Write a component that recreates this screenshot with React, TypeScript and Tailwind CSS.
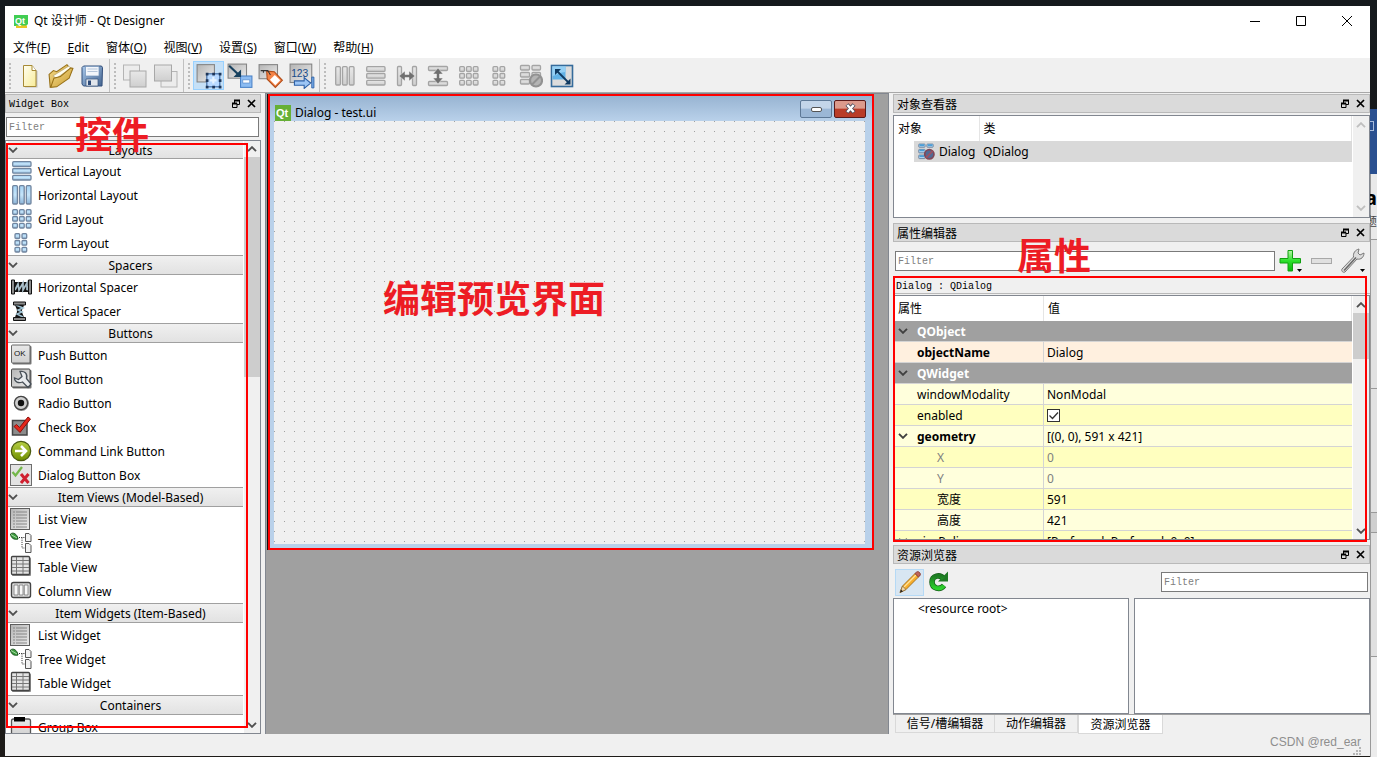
import type { ReactNode } from "react";

const sans = "font-['Noto_Sans','Noto_Sans_CJK_SC',sans-serif]";
const mono = "font-['Liberation_Mono','Noto_Sans_CJK_SC',monospace]";

/* ---------- shared bits ---------- */

function Svg({ size = 24, children }: { size?: number; children: ReactNode }) {
  return (
    <svg width={size} height={size} viewBox="0 0 24 24" fill="none" className="shrink-0" aria-hidden="true">
      {children}
    </svg>
  );
}

function Chevron({ up = false, color = "#505050" }: { up?: boolean; color?: string }) {
  return (
    <svg width="10" height="6" viewBox="0 0 10 6" fill="none" className="shrink-0" aria-hidden="true">
      <path d={up ? "M1 5.2 5 1.2 9 5.2" : "M1 .8 5 4.8 9 .8"} stroke={color} strokeWidth="1.9" />
    </svg>
  );
}

function Gradients() {
  return (
    <svg width="0" height="0" className="absolute" aria-hidden="true">
      <defs>
        <linearGradient id="blueBar" x1="0" y1="0" x2="0" y2="1">
          <stop offset="0" stopColor="#a4d2f4" />
          <stop offset=".5" stopColor="#c6e5fa" />
          <stop offset="1" stopColor="#8bb4d8" />
        </linearGradient>
        <linearGradient id="greyBar" x1="0" y1="0" x2="0" y2="1">
          <stop offset="0" stopColor="#e8e8e8" />
          <stop offset="1" stopColor="#cfcfcf" />
        </linearGradient>
        <linearGradient id="greyBox" x1="0" y1="0" x2="1" y2="1">
          <stop offset="0" stopColor="#b4b4b4" />
          <stop offset="1" stopColor="#ececec" />
        </linearGradient>
        <linearGradient id="paper" x1="0" y1="0" x2="1" y2="1">
          <stop offset="0" stopColor="#fffef2" />
          <stop offset="1" stopColor="#f8ec98" />
        </linearGradient>
        <linearGradient id="gold" x1="0" y1="0" x2="1" y2="1">
          <stop offset="0" stopColor="#f6dc8c" />
          <stop offset="1" stopColor="#c99c30" />
        </linearGradient>
        <linearGradient id="steel" x1="0" y1="0" x2="1" y2="1">
          <stop offset="0" stopColor="#a9c9ec" />
          <stop offset="1" stopColor="#44648f" />
        </linearGradient>
        <linearGradient id="olive" x1="0" y1="0" x2="0" y2="1">
          <stop offset="0" stopColor="#b7cf45" />
          <stop offset="1" stopColor="#6f8e00" />
        </linearGradient>
        <linearGradient id="leaf" x1="0" y1="0" x2="0" y2="1">
          <stop offset="0" stopColor="#1d7b22" />
          <stop offset="1" stopColor="#2cd22c" />
        </linearGradient>
        <linearGradient id="plus" x1="0" y1="0" x2="0" y2="1">
          <stop offset="0" stopColor="#b9f5a8" />
          <stop offset=".5" stopColor="#2de02d" />
          <stop offset="1" stopColor="#08b808" />
        </linearGradient>
      </defs>
    </svg>
  );
}

/* ---------- layout glyphs, blue in the widget box and grey in the toolbar ---------- */

type Tone = "blue" | "grey";
const tones = {
  blue: { fill: "url(#blueBar)", stroke: "#71859f" },
  grey: { fill: "url(#greyBar)", stroke: "#a4a4a4" },
};

function Bars({ rects, tone }: { rects: number[][]; tone: Tone }) {
  return (
    <>
      {rects.map(([x, y, w, h], i) => (
        <rect key={i} x={x} y={y} width={w} height={h} rx="1" fill={tones[tone].fill} stroke={tones[tone].stroke} strokeWidth="1.3" />
      ))}
    </>
  );
}

const grid = (xs: number[], ys: number[], w: number, h: number) => ys.flatMap((y) => xs.map((x) => [x, y, w, h]));
const thirds = [2.7, 9.5, 16.3];

const VRows = ({ tone }: { tone: Tone }) => <Svg><Bars tone={tone} rects={grid([2.7], thirds, 18.3, 4.7)} /></Svg>;
const HCols = ({ tone }: { tone: Tone }) => <Svg><Bars tone={tone} rects={grid(thirds, [2.7], 4.7, 18.3)} /></Svg>;
const GridIcon = ({ tone }: { tone: Tone }) => <Svg><Bars tone={tone} rects={grid(thirds, thirds, 4.7, 4.7)} /></Svg>;
const FormIcon = ({ tone }: { tone: Tone }) => <Svg><Bars tone={tone} rects={grid([5, 12], thirds, 4.7, 4.7)} /></Svg>;

const SplitH = () => (
  <Svg>
    <Bars tone="grey" rects={[[2.5, 2.5, 4, 19], [17.5, 2.5, 4, 19]]} />
    <path d="M4 12l6-5v3.5h4V7l6 5-6 5v-3.5h-4V17z" fill="#707070" stroke="#efefef" strokeWidth=".5" />
  </Svg>
);

const SplitV = () => (
  <Svg>
    <Bars tone="grey" rects={[[2.5, 2.5, 19, 4], [2.5, 17.5, 19, 4]]} />
    <path d="M12 4l5 6h-3.5v4H17l-5 6-5-6h3.5v-4H7z" fill="#707070" stroke="#efefef" strokeWidth=".5" />
  </Svg>
);

const BreakGrey = () => (
  <Svg>
    <Bars tone="grey" rects={[[1.5, 1.5, 9, 4.5], [13, 1.5, 8.5, 4.5], [1.5, 8.5, 9, 4.5], [13, 8.5, 8.5, 4.5], [1.5, 15.5, 9, 4.5]]} />
    <circle cx="17" cy="16.5" r="6" fill="#b4b4b4" stroke="#929292" strokeWidth="2.2" />
    <path d="M13 20.5 21 12.5" stroke="#929292" strokeWidth="2" />
  </Svg>
);

const BreakBlue = () => (
  <Svg size={17}>
    <Bars tone="blue" rects={[[1, 1.5, 9, 4.5], [12.5, 1.5, 9, 4.5], [1, 9, 9, 5], [1, 17, 9, 5]]} />
    <path d="M2 3h7M13.5 3h7M2 10.5h7M2 18.5h7" stroke="#4c9fd8" strokeWidth="2.5" />
    <circle cx="16" cy="16" r="6.5" fill="#506a95" stroke="#804858" strokeWidth="2.5" />
    <path d="M11.5 20.5l9-9" stroke="#a05060" strokeWidth="2.5" />
  </Svg>
);

/* ---------- toolbar glyphs ---------- */

const NewIcon = () => (
  <Svg>
    <path d="M7 2.5h8l4.500 5V23.500H7z" fill="#0003" />
    <path d="M5.500 1.500h8.500l4 5v16h-12.500z" fill="url(#paper)" stroke="#a78a35" />
    <path d="M14 1.500v5h4" fill="#fff" stroke="#a78a35" />
  </Svg>
);

const OpenIcon = () => (
  <Svg size={26}>
    <path d="M2 22 1 10.500 5 7l3 1 9.500-6.500L19 3.500v5z" fill="url(#gold)" stroke="#987118" />
    <path d="M4.500 12 19 3l2 1.500L8 14z" fill="#fffef2" stroke="#b2a16d" strokeWidth=".6" />
    <path d="M2.500 22.500 5.500 14l6-1.500 9.500-8L23 5l-3.500 9L8 22z" fill="url(#gold)" stroke="#987118" />
  </Svg>
);

const SaveIcon = () => (
  <Svg>
    <path d="M2 3.5 3.5 2h18l1 1.500-.5 18.500H3.500L2 20z" fill="url(#steel)" stroke="#33507c" />
    <path d="M5.500 2.500h13.500v9.500H5.500z" fill="#f2f6fb" stroke="#7090b8" strokeWidth=".7" />
    <path d="M7.500 5h10M7.500 7.500h10" stroke="#b4c5da" />
    <path d="M6 15h12v7H6z" fill="#e2e6ec" stroke="#33507c" strokeWidth=".7" />
    <path d="M8 16.500h3V21H8z" fill="#2d4a78" />
  </Svg>
);

const SendBack = () => (
  <Svg>
    <rect x=".5" y="1" width="16" height="15" fill="#ececec" stroke="#b4b4b4" />
    <rect x="7" y="7" width="16" height="16" fill="url(#greyBar)" stroke="#a8a8a8" />
  </Svg>
);

const BringFront = () => (
  <Svg>
    <rect x="7" y="7.500" width="16" height="15.500" fill="#ececec" stroke="#b4b4b4" />
    <rect x=".5" y="1" width="17" height="16" fill="url(#greyBar)" stroke="#a8a8a8" />
  </Svg>
);

const EditWidgets = () => (
  <Svg size={26}>
    <rect x="1" y="1.500" width="16" height="16" fill="url(#greyBox)" stroke="#858585" />
    <rect x="10" y="10" width="12" height="12" fill="#b8d9ff" stroke="#30609c" />
    <path d="M15 13h2v2h2v2h-2v2h-2v-2h-2v-2h2z" fill="#e6f3ff" />
    {grid([9, 15, 21], [9, 15, 21], 3, 3).map(([x, y], i) =>
      i === 4 ? null : <rect key={i} x={x} y={y} width="2.500" height="2.500" fill="#1e3558" />
    )}
  </Svg>
);

const EditSignals = () => (
  <Svg size={26}>
    <rect x="1" y="1" width="17" height="13" fill="url(#greyBox)" stroke="#858585" />
    <rect x="12.500" y="12" width="10.500" height="10.500" fill="#8cbcf2" stroke="#4c84c9" />
    <path d="M14.500 15.500h6.500v3h-6.500z" fill="#fff" stroke="#4c84c9" strokeWidth=".6" />
    <path d="M2 2.500 11 11" stroke="#17405e" strokeWidth="2" />
    <path d="M13 13V6l-7 7z" fill="#17405e" />
  </Svg>
);

const EditBuddies = () => (
  <Svg size={26}>
    <rect x="1" y="1.500" width="17" height="13" fill="url(#greyBox)" stroke="#858585" />
    <path d="M8 7.500 15 8l7.500 8-6.500 6.500L8.500 15z" fill="#f58448" stroke="#b04c18" />
    <path d="M15.500 11 20.500 16l-4.500 4.500L11 15.500z" fill="#fff" />
    <path d="M2.500 7h6.500l2.500 4M5 7v2" stroke="#333" />
  </Svg>
);

const EditTabs = () => (
  <Svg size={26}>
    <rect x="1" y="1" width="20" height="17" fill="url(#greyBox)" stroke="#858585" />
    <text x="2" y="13" fontSize="9.500" fill="#174b88" fontFamily="Liberation Sans, sans-serif">123</text>
    <path d="M5 16.500h9v-3l6 5-6 5v-3H5z" fill="#9cc5f5" stroke="#2b5fa6" />
    <path d="M21 13h2v10h-2z" fill="#79aeea" stroke="#2b5fa6" strokeWidth=".8" />
  </Svg>
);

const AdjustSize = () => (
  <Svg>
    <rect x="1.500" y="1.500" width="21" height="21" fill="#dcdcdc" stroke="#356b9b" strokeWidth="1.600" />
    <rect x="2.500" y="2.500" width="13" height="13" fill="#62b2e6" />
    <path d="M2.500 2.500h13v5.500c-5 0-8 3-13 4z" fill="#94d0f5" />
    <path d="M7 7l11 11" stroke="#103a61" strokeWidth="1.800" />
    <path d="M5 5h6l-6 6zM20.500 20.500h-6l6-6z" fill="#103a61" />
  </Svg>
);

/* ---------- widget glyphs ---------- */

const HSpacer = () => (
  <Svg>
    <path d="M4 7h16v10H4z" fill="#141414" />
    <path d="M5 15 8 9l1 6 4-7v7l4-7v7l3-6" stroke="#a9bfca" strokeWidth="1.700" />
    <path d="M1.500 5h3v14h-3zM18.500 5h3v14h-3z" fill="#8b8b8b" stroke="#111" />
  </Svg>
);

const VSpacer = () => (
  <Svg>
    <path d="M5 4h9c0 5-2 5-2 8s2 4 2 8H5c0-4 2-5 2-8S5 8 5 4z" fill="#141414" />
    <path d="M6 6l7 3-5 2 4 2-5 2 6 3" stroke="#9dc1d2" strokeWidth="1.500" />
    <path d="M3.500 3h12v3h-12zM3.500 18.500h12v3h-12z" fill="#8b8b8b" stroke="#111" />
  </Svg>
);

const PushIcon = () => (
  <Svg>
    <rect x="2.500" y="3" width="19" height="18.500" rx="1" fill="#777" />
    <rect x="1.500" y="2" width="18.500" height="18" rx="1" fill="url(#greyBar)" stroke="#666" />
    <text x="4" y="13" fontSize="8" fill="#111" fontFamily="Liberation Sans, sans-serif">OK</text>
  </Svg>
);

const ToolIcon = () => (
  <Svg>
    <rect x="2.500" y="3" width="19" height="18.500" rx="1" fill="#777" />
    <rect x="1.500" y="2" width="18.500" height="18" rx="1" fill="url(#greyBox)" stroke="#444" />
    <path d="M10 4.500c4-1 8 2 6.500 7l4.500 5.500-3 3.500-5.500-5.500c-4 1.500-8 0-8-4l4 1.500L12 9.500z" fill="#e8ebee" stroke="#485058" strokeWidth="1.300" />
  </Svg>
);

const RadioIcon = () => (
  <Svg>
    <circle cx="11.500" cy="12.500" r="7.500" fill="#8a8a8a" />
    <circle cx="11" cy="12" r="6.600" fill="#cfcfcf" stroke="#444" strokeWidth="1.300" />
    <circle cx="11" cy="12" r="3.200" fill="#111" />
  </Svg>
);

const CheckIcon = () => (
  <Svg>
    <rect x="2.500" y="5.500" width="14.500" height="14.500" fill="#8c8c8c" stroke="#444" strokeWidth="1.500" />
    <path d="M4 11.500 6.500 9.500l3 3L18 2l2.500 2L10 17.500z" fill="#e5281c" stroke="#8e0e0a" />
  </Svg>
);

const CommandIcon = () => (
  <Svg>
    <circle cx="11" cy="12" r="9.700" fill="url(#olive)" stroke="#4a5a10" strokeWidth="1.200" />
    <path d="M5 12h10.500M11 7l5 5-5 5" stroke="#fff" strokeWidth="2.600" />
  </Svg>
);

const DialogBoxIcon = () => (
  <Svg>
    <rect x=".5" y="1.500" width="21" height="21" fill="#e3e3e3" stroke="#6d6d6d" />
    <path d="M2.500 9 5.500 12.500 12 4" stroke="#74b84a" strokeWidth="2.300" />
    <path d="M11 11l7.500 9M18.500 11 11 20" stroke="#cf2030" strokeWidth="3" />
  </Svg>
);

const ListIcon = () => (
  <Svg>
    <rect x=".5" y="1.500" width="19" height="21" fill="url(#greyBox)" stroke="#5e5e5e" />
    <path d="M3 5h2M3 8h2M3 11h2M3 14h2M3 17h2M3 20h2M6 5h11M6 8h11M6 11h11M6 14h11M6 17h11M6 20h11" stroke="#858585" strokeWidth="1.200" />
  </Svg>
);

const TreeIcon = () => (
  <Svg>
    <path d="M.5 3C3 1 7 2.500 8 8 4.500 9 1 7.500.5 3z" fill="#3d9c3d" stroke="#14501a" />
    <path d="M1 3.500 7 7" stroke="#c2eac2" strokeWidth=".8" />
    <path d="M9 6.500h6M12 6.500V17h3" stroke="#222" strokeDasharray="1 1.200" />
    <path d="M15.500 2.500h3.500l2 2v6h-5.500zM15.500 12.500h3.500l2 2v7h-5.500z" fill="#f2f2f2" stroke="#555" />
  </Svg>
);

const TableIcon = () => (
  <Svg>
    <rect x="2" y="2.500" width="19" height="18.500" rx="1" fill="#888" />
    <rect x="1.500" y="1.500" width="18" height="18" rx="1" fill="#e4e4e4" stroke="#444" strokeWidth="1.300" />
    <path d="M6.500 2v17M13 2v17M2 5.500h17M2 9h17M2 12.500h17M2 16h17" stroke="#777" />
  </Svg>
);

const ColumnIcon = () => (
  <Svg>
    <rect x="1.500" y="3.500" width="19" height="15" rx="2" fill="#ddd" stroke="#444" strokeWidth="1.400" />
    <path d="M4 6h4v10H4zM9.300 6h3.700v10H9.300zM14.300 6h3.700v10h-3.700z" fill="#f8f8f8" stroke="#777" strokeWidth=".8" />
  </Svg>
);

const GroupIcon = () => (
  <Svg>
    <rect x="1.500" y="4" width="19" height="18" rx="2" fill="url(#greyBar)" stroke="#555" strokeWidth="1.300" />
    <path d="M4 2h11v4.500H4z" fill="#000" />
  </Svg>
);

/* ---------- data ---------- */

const menus = [
  ["文件", "F"],
  ["", "Edit"],
  ["窗体", "O"],
  ["视图", "V"],
  ["设置", "S"],
  ["窗口", "W"],
  ["帮助", "H"],
];

const toolGroups: { label: string; icon: ReactNode; active?: boolean }[][] = [
  [
    { label: "New", icon: <NewIcon /> },
    { label: "Open", icon: <OpenIcon /> },
    { label: "Save", icon: <SaveIcon /> },
  ],
  [
    { label: "Send to Back", icon: <SendBack /> },
    { label: "Bring to Front", icon: <BringFront /> },
  ],
  [
    { label: "Edit Widgets", icon: <EditWidgets />, active: true },
    { label: "Edit Signals/Slots", icon: <EditSignals /> },
    { label: "Edit Buddies", icon: <EditBuddies /> },
    { label: "Edit Tab Order", icon: <EditTabs /> },
  ],
  [
    { label: "Lay Out Horizontally", icon: <HCols tone="grey" /> },
    { label: "Lay Out Vertically", icon: <VRows tone="grey" /> },
    { label: "Split Horizontally", icon: <SplitH /> },
    { label: "Split Vertically", icon: <SplitV /> },
    { label: "Lay Out in a Grid", icon: <GridIcon tone="grey" /> },
    { label: "Lay Out in a Form", icon: <FormIcon tone="grey" /> },
    { label: "Break Layout", icon: <BreakGrey /> },
    { label: "Adjust Size", icon: <AdjustSize /> },
  ],
];

const widgetGroups: { title: string; items: [string, ReactNode][] }[] = [
  {
    title: "Layouts",
    items: [
      ["Vertical Layout", <VRows tone="blue" />],
      ["Horizontal Layout", <HCols tone="blue" />],
      ["Grid Layout", <GridIcon tone="blue" />],
      ["Form Layout", <FormIcon tone="blue" />],
    ],
  },
  {
    title: "Spacers",
    items: [
      ["Horizontal Spacer", <HSpacer />],
      ["Vertical Spacer", <VSpacer />],
    ],
  },
  {
    title: "Buttons",
    items: [
      ["Push Button", <PushIcon />],
      ["Tool Button", <ToolIcon />],
      ["Radio Button", <RadioIcon />],
      ["Check Box", <CheckIcon />],
      ["Command Link Button", <CommandIcon />],
      ["Dialog Button Box", <DialogBoxIcon />],
    ],
  },
  {
    title: "Item Views (Model-Based)",
    items: [
      ["List View", <ListIcon />],
      ["Tree View", <TreeIcon />],
      ["Table View", <TableIcon />],
      ["Column View", <ColumnIcon />],
    ],
  },
  {
    title: "Item Widgets (Item-Based)",
    items: [
      ["List Widget", <ListIcon />],
      ["Tree Widget", <TreeIcon />],
      ["Table Widget", <TableIcon />],
    ],
  },
  { title: "Containers", items: [["Group Box", <GroupIcon />]] },
];

type Prop = { name: string; value?: string; kind?: "group" | "check"; open?: boolean; bold?: boolean; child?: boolean; muted?: boolean; bg: string };

const props: Prop[] = [
  { name: "QObject", kind: "group", open: true, bold: true, bg: "bg-[#a0a0a0]" },
  { name: "objectName", value: "Dialog", bold: true, bg: "bg-[#fff0df]" },
  { name: "QWidget", kind: "group", open: true, bold: true, bg: "bg-[#a0a0a0]" },
  { name: "windowModality", value: "NonModal", bg: "bg-[#ffffdc]" },
  { name: "enabled", kind: "check", bg: "bg-[#ffffbf]" },
  { name: "geometry", value: "[(0, 0), 591 x 421]", open: true, bold: true, bg: "bg-[#ffffdc]" },
  { name: "X", value: "0", child: true, muted: true, bg: "bg-[#ffffbf]" },
  { name: "Y", value: "0", child: true, muted: true, bg: "bg-[#ffffdc]" },
  { name: "宽度", value: "591", child: true, bg: "bg-[#ffffbf]" },
  { name: "高度", value: "421", child: true, bg: "bg-[#ffffdc]" },
  { name: "sizePolicy", value: "[Preferred, Preferred, 0, 0]", open: true, bg: "bg-[#ffffbf]" },
];

/* ---------- panels ---------- */

function DockTitle({ children }: { children: ReactNode }) {
  return (
    <div className="flex h-[19px] shrink-0 items-center border border-[#b9b9b9] bg-[#dadada] pl-[3px] pr-1">
      <h2 className="flex-1 pt-0.5">{children}</h2>
      <button aria-label="Float" className="mr-1.5">
        <svg width="10" height="10" viewBox="0 0 10 10" fill="none">
          <path d="M3.500 4V1.500h5v4H6" stroke="#000" />
          <path d="M3 1.500h6M1 4.500h5" stroke="#000" strokeWidth="2" />
          <path d="M1.500 4.500h4.500v4H1.500z" stroke="#000" />
        </svg>
      </button>
      <button aria-label="Close">
        <svg width="9" height="9" viewBox="0 0 9 9">
          <path d="M1 1l7 7M8 1 1 8" stroke="#000" strokeWidth="1.700" />
        </svg>
      </button>
    </div>
  );
}

function Filter({ label, className }: { label: string; className: string }) {
  return (
    <input
      aria-label={label}
      placeholder="Filter"
      className={`h-5 border border-[#7a7a7a] bg-white px-0.5 text-[10px] outline-none placeholder:text-[#808080] ${mono} ${className}`}
    />
  );
}

function TitleBar() {
  return (
    <header className="flex h-[30px] shrink-0 items-center bg-white">
      <svg width="15" height="13" viewBox="0 0 15 13" className="ml-2 mr-1.5" aria-hidden="true">
        <path d="M1 0h14v9l-2 2H1z" fill="#41cd52" />
        <path d="M3 10.500h11V13H3z" fill="#e9c623" />
        <text x="2" y="9" fontSize="9" fontWeight="bold" fill="#fff" fontFamily="Liberation Sans, sans-serif">Qt</text>
      </svg>
      <h1 className="flex-1">Qt 设计师 - Qt Designer</h1>
      <button aria-label="Minimize" className="flex h-full w-[46px] items-center justify-center">
        <svg width="10" height="10"><path d="M0 5.500h10" stroke="#000" /></svg>
      </button>
      <button aria-label="Maximize" className="flex h-full w-[46px] items-center justify-center">
        <svg width="10" height="10"><path d="M.5.5h9v9h-9z" stroke="#000" fill="none" /></svg>
      </button>
      <button aria-label="Close" className="flex h-full w-[46px] items-center justify-center">
        <svg width="10" height="10"><path d="M0 0l10 10M10 0 0 10" stroke="#000" /></svg>
      </button>
    </header>
  );
}

function MenuBar() {
  return (
    <nav className="flex h-[23px] shrink-0 items-center gap-px border-b border-[#f0f0f0] bg-white pt-0.5">
      {menus.map(([name, key]) => (
        <button key={key} className="px-2">
          {name ? (
            <>
              {name}(<u>{key}</u>)
            </>
          ) : (
            <>
              <u>E</u>dit
            </>
          )}
        </button>
      ))}
    </nav>
  );
}

function ToolBar() {
  return (
    <div className="flex h-[34px] shrink-0 border-b border-[#a8a8a8]">
      {toolGroups.map((group, i) => (
        <div key={i} className={`flex items-center pr-0.5 ${i < 3 ? "border-r border-[#c0c0c0]" : ""}`}>
          <div className="flex w-[9px] flex-col items-center gap-0.5">
            {Array.from({ length: 7 }, (_, n) => (
              <span key={n} className="size-0.5 bg-[#bdbdbd]" />
            ))}
          </div>
          {group.map((tool) => (
            <button
              key={tool.label}
              aria-label={tool.label}
              className={`flex h-[29px] w-[31px] items-center justify-center border ${
                tool.active ? "border-[#99d1ff] bg-[#c5e0f7]" : "border-transparent"
              }`}
            >
              {tool.icon}
            </button>
          ))}
        </div>
      ))}
    </div>
  );
}

function WidgetBox() {
  return (
    <aside className="flex w-[256px] shrink-0 flex-col">
      <div className={`text-[10px] ${mono}`}>
        <DockTitle>Widget Box</DockTitle>
      </div>
      <Filter label="Filter widgets" className="mb-[3px] ml-px mr-0.5 mt-1 shrink-0" />
      <div className="relative flex min-h-0 flex-1 border border-[#828790] bg-white">
        <div className="min-w-0 flex-1 overflow-hidden pl-0.5">
          {widgetGroups.map((group, i) => (
            <section key={group.title}>
              <h3
                className={`flex items-center border-b border-[#a0a0a0] bg-linear-to-b from-[#f0f0f0] to-[#e2e2e2] ${
                  i === 0 ? "h-[18px]" : "h-5 border-t"
                }`}
              >
                <Chevron />
                <span className="flex-1 pt-0.5 text-center">{group.title}</span>
              </h3>
              <ul>
                {group.items.map(([name, icon]) => (
                  <li key={name}>
                    <button className="flex h-6 w-full items-center gap-1 pl-0.5 text-left">
                      {icon}
                      <span className="pt-0.5">{name}</span>
                    </button>
                  </li>
                ))}
              </ul>
            </section>
          ))}
        </div>
        <div className="ml-px flex w-4 flex-col items-center bg-[#f0f0f0]">
          <div className="flex h-4 items-center">
            <Chevron up />
          </div>
          <div className="h-[220px] w-full bg-[#cdcdcd]" />
          <div className="mt-auto flex h-4 items-center">
            <Chevron />
          </div>
        </div>
        <div className="pointer-events-none absolute bottom-[5px] left-0 right-3 top-0.5 border-2 border-[#ff0000]" />
        <p className="pointer-events-none absolute -top-7 left-[69px] whitespace-nowrap text-[37px] font-bold leading-[44px] text-[#ed1c24]">
          控件
        </p>
      </div>
    </aside>
  );
}

function Workspace() {
  return (
    <main className="relative mx-1 -mt-px min-w-0 flex-1 overflow-hidden border border-b-0 border-[#828790] bg-[#a0a0a0]">
      <div className="absolute left-0.5 top-0 flex h-[456px] w-[606px] flex-col border-2 border-[#ff0000] bg-[#b9d1ea] px-[3px] pb-1 shadow-[-1px_0_0_#111]">
        <div className="-mx-[3px] flex h-[25px] shrink-0 items-center bg-linear-to-b from-[#98b4d2] to-[#b9d1ea] pl-[5px] pr-1.5">
          <svg width="16" height="16" viewBox="0 0 16 16" className="mr-1 mt-2" aria-hidden="true">
            <rect width="16" height="16" fill="#66b036" />
            <text x="1" y="12" fontSize="11" fontWeight="bold" fill="#fff" fontFamily="Liberation Sans, sans-serif">Qt</text>
          </svg>
          <h2 className="mt-2 flex-1">Dialog - test.ui</h2>
          <button
            aria-label="Minimize form"
            className="mr-0.5 flex h-[18px] w-8 items-center justify-center rounded-xs border border-[#5d7896] bg-linear-to-b from-[#c3d5e9] from-45% to-[#9bb7d6] to-50%"
          >
            <span className="mt-0.5 h-[5px] w-[11px] rounded-xs border border-[#555] bg-white" />
          </button>
          <button
            aria-label="Close form"
            className="flex h-[18px] w-8 items-center justify-center rounded-xs border border-[#5a1a1a] bg-linear-to-b from-[#dc9a8c] from-45% to-[#b93c28] to-50%"
          >
            <svg width="13" height="11" viewBox="0 0 13 11">
              <path d="M3 1.500l7 8M10 1.500l-7 8" stroke="#4a4a5a" strokeWidth="4" />
              <path d="M3.300 2l6.400 7M9.700 2 3.300 9" stroke="#fff" strokeWidth="2.400" />
            </svg>
          </button>
        </div>
        <div className="ml-px mr-1 flex-1 bg-[#f0f0f0] bg-[conic-gradient(at_1px_1px,#0000_75%,#a0a0a0_0)] bg-size-[10px_10px]" />
        <p className="absolute left-[113px] top-[181px] whitespace-nowrap text-[37px] font-bold leading-[44px] text-[#ed1c24]">编辑预览界面</p>
      </div>
    </main>
  );
}

function ObjectInspector() {
  return (
    <section>
      <DockTitle>对象查看器</DockTitle>
      <div className="mt-0.5 flex h-[103px] border border-[#828790] bg-white">
        <table className="w-full table-fixed self-start">
          <thead>
            <tr className="h-[25px] text-left">
              <th className="w-[85px] border-r border-[#e5e5e5] pl-1 font-normal">对象</th>
              <th className="border-r border-[#e5e5e5] pl-1 font-normal">类</th>
            </tr>
          </thead>
          <tbody>
            <tr className="h-[21px]">
              <td className="p-0 pl-5">
                <div className="flex h-[21px] items-center gap-1 bg-[#d9d9d9] pl-1">
                  <BreakBlue />
                  Dialog
                </div>
              </td>
              <td className="bg-[#d9d9d9] pl-1">QDialog</td>
            </tr>
          </tbody>
        </table>
        <div className="ml-px flex w-4 shrink-0 flex-col items-center justify-between bg-[#f0f0f0] py-1.5">
          <Chevron up color="#bfbfbf" />
          <Chevron color="#bfbfbf" />
        </div>
      </div>
    </section>
  );
}

function PropertyEditor() {
  return (
    <section className="mt-[5px] flex min-h-0 flex-1 flex-col">
      <DockTitle>属性编辑器</DockTitle>
      <div className="relative flex h-9 shrink-0 items-center pl-0.5 pt-0.5">
        <Filter label="Filter properties" className="min-w-0 flex-1" />
        <button aria-label="Add property" className="ml-[3px] w-7">
          <svg width="28" height="24" viewBox="0 0 28 24">
            <path d="M10 1.500h4.500v8h8V14h-8v8H10v-8H2V9.500h8z" fill="url(#plus)" stroke="#10a010" />
            <path d="M19 20h5l-2.500 3z" fill="#000" />
          </svg>
        </button>
        <button aria-label="Remove property" className="ml-1 w-6">
          <svg width="24" height="24" viewBox="0 0 24 24">
            <rect x="1.500" y="9.500" width="20" height="5" fill="#e0e0e0" stroke="#a8a8a8" />
          </svg>
        </button>
        <button aria-label="Configure" className="ml-1.5 mr-1 w-[26px]">
          <svg width="26" height="26" viewBox="0 0 26 26">
            <path d="M2 21 13.500 9c-.5-4 1.500-7 5.500-8l-1 4 2 2 4-2c0 4-3 7-7 6L5 24c-2 1-4-1-3-3z" fill="#dcdcdc" stroke="#777" />
            <path d="M4 22.500 16 9.500" stroke="#666" strokeWidth="1.500" />
            <path d="M20 21h5l-2.500 3z" fill="#000" />
          </svg>
        </button>
        <p className="pointer-events-none absolute -top-2 left-[124px] whitespace-nowrap text-[37px] font-bold leading-[44px] text-[#ed1c24]">
          属性
        </p>
      </div>
      <div className="relative -mt-0.5 flex min-h-0 flex-1 flex-col pb-0.5 pt-0.5">
        <div className={`mb-px h-4 shrink-0 border-b border-[#b9b9b9] pl-[3px] text-[10px] leading-[17px] ${mono}`}>Dialog : QDialog</div>
        <div className="flex min-h-0 flex-1 border border-[#828790] bg-white">
          <div className="min-w-0 flex-1 overflow-hidden">
            <table className="w-full table-fixed border-separate border-spacing-0">
              <thead>
                <tr className="h-[25px] text-left">
                  <th className="w-[150px] border-r border-[#e5e5e5] pl-1 font-normal">属性</th>
                  <th className="border-r border-[#e5e5e5] pl-1 font-normal">值</th>
                </tr>
              </thead>
              <tbody>
                {props.map((p) => (
                  <tr key={p.name} className={`h-[21px] ${p.bg}`}>
                    <td
                      colSpan={p.kind === "group" ? 2 : 1}
                      className={`border-b border-[#d4d4d4] p-0 ${p.kind === "group" ? "text-white" : "border-r"}`}
                    >
                      <div className={`flex h-5 items-center ${p.bold ? "font-bold" : ""} ${p.muted ? "text-[#808080]" : ""}`}>
                        <span className={`pl-1 ${p.child ? "w-[43px]" : "w-[23px]"}`}>{p.open && <Chevron color="#404040" />}</span>
                        <span className="pt-0.5">{p.name}</span>
                      </div>
                    </td>
                    {p.kind !== "group" && (
                      <td className={`whitespace-nowrap border-b border-[#d4d4d4] p-0 pl-[3px] ${p.muted ? "text-[#808080]" : ""}`}>
                        {p.kind === "check" ? (
                          <span className="relative flex size-[13px]">
                            <input type="checkbox" defaultChecked aria-label={p.name} className="peer size-[13px] appearance-none border border-[#333] bg-white" />
                            <svg width="13" height="13" className="pointer-events-none absolute inset-0 hidden peer-checked:block">
                              <path d="M2.500 6.500 5.500 9.500 11 3.500" stroke="#333" strokeWidth="1.300" fill="none" />
                            </svg>
                          </span>
                        ) : (
                          <div className="flex h-5 items-center pt-0.5">{p.value}</div>
                        )}
                      </td>
                    )}
                  </tr>
                ))}
              </tbody>
            </table>
          </div>
          <div className="ml-px flex w-4 shrink-0 flex-col items-center bg-[#f0f0f0]">
            <div className="flex h-[17px] items-center">
              <Chevron up />
            </div>
            <div className="h-[46px] w-full bg-[#cdcdcd]" />
            <div className="mt-auto flex h-[17px] items-center">
              <Chevron />
            </div>
          </div>
        </div>
        <div className="pointer-events-none absolute bottom-0 left-0 right-[3px] top-0 border-2 border-[#ff0000]" />
      </div>
    </section>
  );
}

function ResourceBrowser() {
  return (
    <section className="mt-[3px] shrink-0">
      <DockTitle>资源浏览器</DockTitle>
      <div className="flex h-[34px] items-center px-0.5 pt-0.5">
        <button aria-label="Edit resources" className="flex h-[27px] w-[29px] items-center justify-center border border-[#b5d9f5] bg-[#d8e6f2]">
          <Svg>
            <path d="M2 22.500 4.500 16 17 3.500l3.500 3.500L8 19.500z" fill="#f6ae2d" stroke="#96610f" strokeWidth=".8" />
            <path d="M6 17 18 5" stroke="#ffe29a" strokeWidth="1.300" />
            <path d="M17 3.500c2-2 3-2.500 4.500-1s1 3-1 4.500z" fill="#c06458" stroke="#8c3c34" />
            <path d="M2 22.500 4.500 16 8 19.500z" fill="#eed6aa" stroke="#84602c" strokeWidth=".7" />
            <path d="M2 22.500l1-3 2 2z" fill="#222" />
          </Svg>
        </button>
        <button aria-label="Reload" className="ml-0.5">
          <Svg>
            <path d="M17.500 8.500C14 4 6 5.500 6 12s8 8.500 12 3.500" stroke="#155c18" strokeWidth="5.500" />
            <path d="M22 1.500v10H12z" fill="#1f7a24" />
            <path d="M17.500 8.500C14 4 6 5.500 6 12s8 8.500 12 3.500" stroke="url(#leaf)" strokeWidth="4.200" />
          </Svg>
        </button>
        <Filter label="Filter resources" className="ml-auto w-[207px]" />
      </div>
      <div className="grid h-[116px] grid-cols-2 gap-[5px]">
        <div className="border border-[#828790] bg-white pl-6 pt-0.5">&lt;resource root&gt;</div>
        <div className="border border-[#828790] bg-white" />
      </div>
      <div className="flex h-5 items-start border-t border-[#a0a0a0] pl-0.5">
        <button className="h-[18px] w-[100px] border border-t-0 border-[#d9d9d9] leading-[17px]">信号/槽编辑器</button>
        <button className="h-[18px] w-[83px] border border-l-0 border-t-0 border-[#d9d9d9] leading-[17px]">动作编辑器</button>
        <button className="h-[19px] w-[85px] border border-t-0 border-[#d9d9d9] bg-white leading-[19px]">资源浏览器</button>
      </div>
    </section>
  );
}

/* slice of the desktop that shows beside the window */
function DesktopEdge() {
  return (
    <div className="w-[7px] shrink-0 overflow-hidden">
      <div className="h-[109px]" />
      <div className="h-[65px] bg-[#2a5090] pt-3">
        <div className="h-2.5 w-1 border border-l-0 border-[#a8bcdc]" />
      </div>
      <div className="h-[65px] border-l border-[#999] bg-[#e9e9e9] pt-3 text-xl font-bold leading-6">
        <span className="-ml-1.5">a</span>
        <p className="-ml-1.5 whitespace-nowrap text-xs font-normal leading-6 text-[#444]">题</p>
      </div>
      <div className="h-[150px] border-b border-l border-t border-[#999] bg-[#e2e2e2]" />
      <div className="h-[124px] border-b border-l border-[#999] bg-[#e2e2e2]" />
      <div className="h-5 border-b border-l border-[#999] bg-[#cfcfcf]" />
      <div className="h-[124px] border-b border-l border-[#999] bg-[#e0e0e0]" />
      <div className="h-[100px] border-l border-[#999] bg-[#ececec]" />
    </div>
  );
}

export default function App() {
  return (
    <div className={`flex h-screen min-h-[700px] overflow-hidden bg-linear-to-b from-[#15191d] to-[#1d1b18] pl-[5px] text-xs text-black ${sans}`}>
      <Gradients />
      <div className="relative mb-px mt-1.5 flex min-w-0 flex-1 flex-col bg-[#f0f0f0]">
        <TitleBar />
        <MenuBar />
        <ToolBar />
        <div className="flex min-h-0 flex-1 pt-px">
          <WidgetBox />
          <Workspace />
          <aside className="flex w-[477px] shrink-0 flex-col">
            <ObjectInspector />
            <PropertyEditor />
            <ResourceBrowser />
          </aside>
        </div>
        <footer className="flex h-[22px] shrink-0 items-start justify-end pr-2">
          <svg width="9" height="9" className="mt-auto" aria-hidden="true">
            <path d="M6 1h2M3 4h2M6 4h2M0 7h2M3 7h2M6 7h2" stroke="#b5b5b5" strokeWidth="2" />
          </svg>
        </footer>
        <p className="absolute bottom-1.5 right-[9px] font-['Liberation_Sans',sans-serif] text-[#8e8e8e]">CSDN @red_ear</p>
      </div>
      <DesktopEdge />
    </div>
  );
}
